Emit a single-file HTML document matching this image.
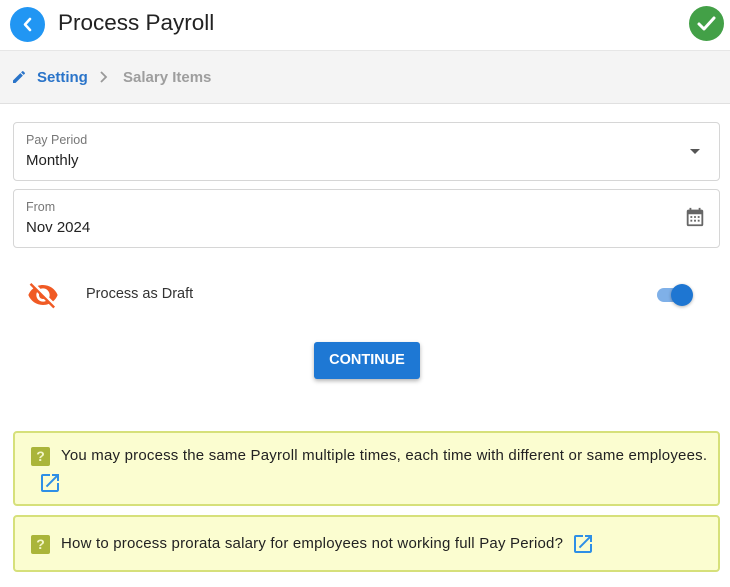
<!DOCTYPE html>
<html><head><meta charset="utf-8"><style>
*{box-sizing:border-box;margin:0;padding:0}
body{width:730px;height:587px;background:#fff;font-family:"Liberation Sans",sans-serif;position:relative;overflow:hidden;color:#222}
.a{position:absolute}
.field{position:absolute;left:13px;width:707px;height:59px;border:1px solid #d6d6d6;border-radius:4px}
.field .l{position:absolute;left:12px;top:10px;font-size:12.5px;color:#777}
.field .v{position:absolute;left:12px;top:29px;font-size:15px;color:#222}
.box{position:absolute;left:13px;width:707px;background:#fbfdd0;border:2px solid #d6e07a;border-radius:4px}
.q{position:absolute;left:16px;width:19px;height:19px;background:#aab53a;color:#f3f6c8;font-size:14px;font-weight:bold;text-align:center;line-height:19px;border-radius:2px}
.t{position:absolute;left:46px;font-size:15px;letter-spacing:0.2px;color:#222;white-space:nowrap}
</style></head><body>
<div class="a" style="left:10px;top:7px;width:35px;height:35px;border-radius:50%;background:#2196f3"></div>
<svg class="a" style="left:10px;top:7px" width="35" height="35"><path d="M20 12 L15 17.5 L20 23" stroke="#fff" stroke-width="2.6" fill="none" stroke-linecap="round" stroke-linejoin="round"/></svg>
<div class="a" style="left:58px;top:10px;font-size:22.5px;color:#222">Process Payroll</div>
<div class="a" style="left:689px;top:6px;width:35px;height:35px;border-radius:50%;background:#43a047"></div>
<svg class="a" style="left:689px;top:6px" width="35" height="35"><path d="M10 18 L15 23 L25 12" stroke="#fff" stroke-width="3" fill="none" stroke-linecap="round" stroke-linejoin="round"/></svg>
<div class="a" style="left:0;top:50px;width:730px;height:54px;background:#f4f4f4;border-top:1px solid #e6e6e6;border-bottom:1px solid #e0e0e0"></div>
<svg class="a" style="left:11px;top:69px" width="16" height="16" viewBox="0 0 24 24"><path fill="#2a74c9" d="M3 17.25V21h3.75L17.81 9.94l-3.75-3.75L3 17.25zM20.71 7.04a1 1 0 0 0 0-1.41l-2.34-2.34a1 1 0 0 0-1.41 0l-1.83 1.83 3.75 3.75 1.83-1.83z"/></svg>
<div class="a" style="left:37px;top:69px;font-size:15px;font-weight:bold;color:#2a74c9">Setting</div>
<svg class="a" style="left:98px;top:70px" width="12" height="14"><path d="M3 2 L8 7 L3 12" stroke="#999" stroke-width="1.8" fill="none"/></svg>
<div class="a" style="left:123px;top:69px;font-size:15px;font-weight:bold;color:#9e9e9e">Salary Items</div>
<div class="field" style="top:122px"><div class="l">Pay Period</div><div class="v">Monthly</div>
<svg class="a" style="left:675px;top:25px" width="12" height="8"><path d="M1 1 L11 1 L6 6z" fill="#555"/></svg></div>
<div class="field" style="top:189px"><div class="l">From</div><div class="v">Nov 2024</div>
<svg class="a" style="left:670px;top:16px" width="22" height="22" viewBox="0 0 24 24"><path fill="#666" d="M19 4h-1V2h-2v2H8V2H6v2H5a2 2 0 0 0-2 2v14a2 2 0 0 0 2 2h14a2 2 0 0 0 2-2V6a2 2 0 0 0-2-2zm0 16H5V9h14v11zM7 11h2v2H7zm4 0h2v2h-2zm4 0h2v2h-2zm-8 4h2v2H7zm4 0h2v2h-2zm4 0h2v2h-2z"/></svg></div>
<svg class="a" style="left:25px;top:279px" width="36" height="32" viewBox="0 0 24 24"><path fill="#f05a24" d="M12 7c2.76 0 5 2.24 5 5 0 .65-.13 1.26-.36 1.830l2.92 2.92c1.51-1.26 2.7-2.89 3.43-4.75-1.73-4.39-6-7.5-11-7.5-1.4 0-2.74.25-3.98.7l2.16 2.16C10.74 7.13 11.35 7 12 7zM2 4.27l2.28 2.28.46.46A11.8 11.8 0 0 0 1 12c1.730 4.39 6 7.5 11 7.5 1.55 0 3.03-.3 4.38-.84l.42.42L19.73 22 21 20.73 3.27 3 2 4.27zM7.53 9.8l1.55 1.55c-.05.21-.08.43-.08.65 0 1.66 1.34 3 3 3 .22 0 .44-.03.65-.08l1.55 1.55c-.67.33-1.41.53-2.2.53-2.76 0-5-2.24-5-5 0-.79.2-1.53.53-2.2z"/></svg>
<div class="a" style="left:86px;top:286px;font-size:14.5px;color:#333">Process as Draft</div>
<div class="a" style="left:657px;top:288px;width:30px;height:14px;border-radius:7px;background:#7fb0e8"></div>
<div class="a" style="left:671px;top:284px;width:22px;height:22px;border-radius:50%;background:#1e76d2;box-shadow:0 1px 3px rgba(0,0,0,.3)"></div>
<div class="a" style="left:314px;top:342px;width:106px;height:37px;background:#1e78d4;border-radius:3px;box-shadow:0 2px 4px rgba(0,0,0,.3);color:#fff;font-weight:bold;font-size:14.5px;text-align:center;line-height:37px">CONTINUE</div>
<div class="box" style="top:431px;height:75px"><div class="q" style="top:14px">?</div>
<div class="t" style="top:14px">You may process the same Payroll multiple times, each time with different or same employees.</div>
<svg class="a" style="left:23px;top:38px" width="24" height="24" viewBox="0 0 24 24"><path fill="#2e8fe6" d="M19 19H5V5h7V3H5a2 2 0 0 0-2 2v14a2 2 0 0 0 2 2h14c1.1 0 2-.9 2-2v-7h-2v7zM14 3v2h3.59l-9.83 9.83 1.41 1.41L19 6.41V10h2V3h-7z"/></svg></div>
<div class="box" style="top:515px;height:57px"><div class="q" style="top:18px">?</div>
<div class="t" style="top:18px">How to process prorata salary for employees not working full Pay Period?</div>
<svg class="a" style="left:556px;top:15px" width="24" height="24" viewBox="0 0 24 24"><path fill="#2e8fe6" d="M19 19H5V5h7V3H5a2 2 0 0 0-2 2v14a2 2 0 0 0 2 2h14c1.1 0 2-.9 2-2v-7h-2v7zM14 3v2h3.59l-9.83 9.83 1.41 1.41L19 6.41V10h2V3h-7z"/></svg></div>
</body></html>
